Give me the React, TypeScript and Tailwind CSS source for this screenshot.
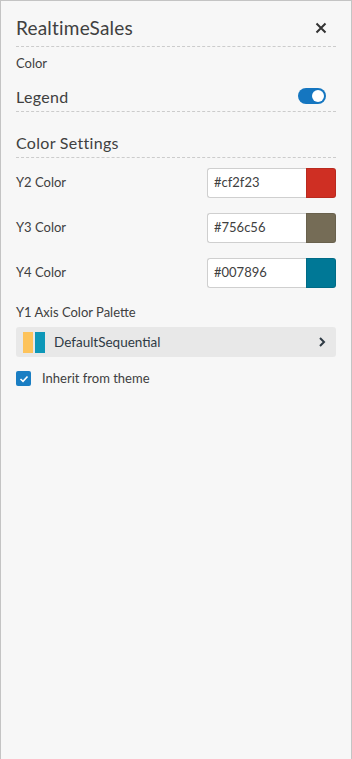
import React from "react";

const font = { fontFamily: "Lato, 'Open Sans', sans-serif" };

function ColorRow({ label, value }: { label: string; value: string }) {
  return (
    <div className="flex items-center justify-between h-[30px]">
      <span className="text-[13px] text-[#404040]">{label}</span>
      <div className="flex h-[30px] w-[129px]">
        <div className="flex-1 flex items-center pl-[6px] bg-white border border-[#cfcfcf] border-r-0 rounded-l-[3px] text-[13px] text-[#404040]">
          {value}
        </div>
        <div className="w-[30px] rounded-r-[3px] border border-black/10" style={{ backgroundColor: value }} />
      </div>
    </div>
  );
}

export default function App() {
  return (
    <div
      className="w-[352px] h-[759px] bg-[#f7f7f7] border-x border-t border-[#c4c4c4] px-[15px] text-[#404040]"
      style={font}
    >
      <div className="flex items-center justify-between h-[46px] pt-[9px] border-b border-dashed border-[#cccccc]">
        <span className="text-[19px] tracking-[0.2px] text-[#404040]">RealtimeSales</span>
        <svg width="12" height="12" viewBox="0 0 12 12" className="mr-[9px]">
          <path d="M1.5 1.5 L10.5 10.5 M10.5 1.5 L1.5 10.5" stroke="#333" strokeWidth="2" />
        </svg>
      </div>
      <div className="pt-[7px] text-[13px]">Color</div>
      <div className="flex items-center justify-between h-[38px] pt-[7px] border-b border-dashed border-[#cccccc]">
        <span className="text-[16px] tracking-[0.3px] pt-[2px]">Legend</span>
        <div className="relative w-[28px] h-[16px] rounded-full bg-[#1576c0] mr-[10px]">
          <div className="absolute right-[2px] top-[2px] w-[12px] h-[12px] rounded-full bg-white" />
        </div>
      </div>
      <div className="flex items-end h-[46px] pb-[2px] border-b border-dashed border-[#cccccc]">
        <span className="text-[16px] tracking-[0.3px]">Color Settings</span>
      </div>
      <div className="flex flex-col gap-[15px] pt-[10px]">
        <ColorRow label="Y2 Color" value="#cf2f23" />
        <ColorRow label="Y3 Color" value="#756c56" />
        <ColorRow label="Y4 Color" value="#007896" />
      </div>
      <div className="pt-[15px] text-[13px]">Y1 Axis Color Palette</div>
      <div className="mt-[5px] h-[30px] rounded-[3px] bg-[#e8e8e8] flex items-center pl-[7px] pr-[10px]">
        <div className="flex gap-[2px]">
          <div className="w-[10px] h-[21px] bg-[#fdc35b]" />
          <div className="w-[10px] h-[21px] bg-[#0d97b8]" />
        </div>
        <span className="ml-[9px] text-[13.5px] text-[#2e3a44] flex-1">DefaultSequential</span>
        <svg width="8" height="12" viewBox="0 0 8 12">
          <path d="M2 2 L6 6 L2 10" stroke="#2e3a44" strokeWidth="2" fill="none" />
        </svg>
      </div>
      <div className="flex items-center mt-[12px]">
        <div className="w-[15px] h-[15px] rounded-[2px] bg-[#1a7ec3] flex items-center justify-center">
          <svg width="10" height="8" viewBox="0 0 10 8">
            <path d="M1.5 4 L4 6.3 L8.5 1.5" stroke="white" strokeWidth="1.6" fill="none" />
          </svg>
        </div>
        <span className="ml-[11px] text-[13px]">Inherit from theme</span>
      </div>
    </div>
  );
}
